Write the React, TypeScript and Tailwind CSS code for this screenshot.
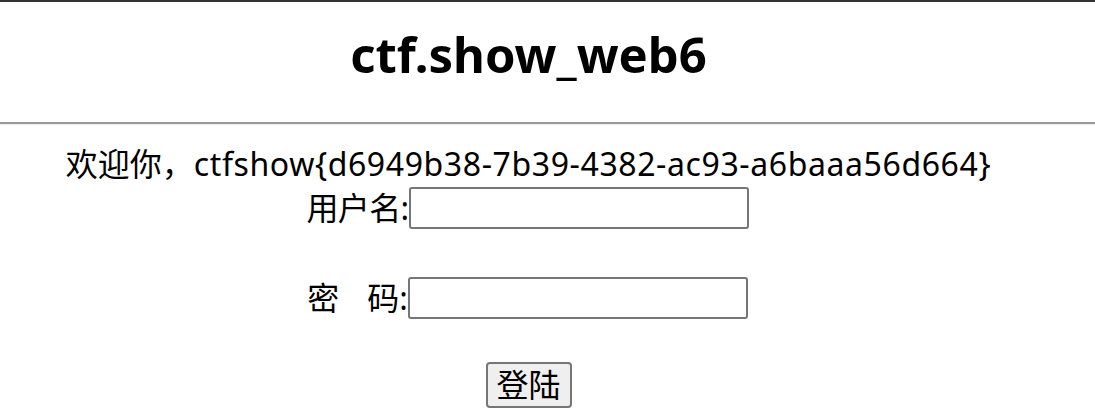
export default function App() {
  return (
    <div
      className="min-h-[417px] w-[1095px] bg-white text-black"
      style={{ fontFamily: '"Noto Sans", "Noto Sans CJK SC", sans-serif' }}
    >
      <div className="h-[2px] w-full bg-[#333333]" />
      <div className="w-[1057px]">
        <h1 className="pt-[14px] pb-[30px] text-center text-[49px] font-bold leading-[76px]">
          ctf.show_web6
        </h1>
      </div>
      <div className="border-t-2 border-b border-t-[#999999] border-b-[#eeeeee]" />
      <div className="flex w-[1057px] flex-col items-center pt-[19px] text-[32px] leading-[40px]">
        <p>
          欢迎你，<span className="tracking-[0.6px]">ctfshow{"{"}d6949b38-7b39-4382-ac93-a6baaa56d664{"}"}</span>
        </p>
        <div className="mt-[3px] flex items-center pr-[2px]">
          <span className="tracking-[-0.6px]">用户名:</span>
          <input className="h-[42px] w-[340px] rounded-[3px] border-2 border-[#767676]" />
        </div>
        <div className="mt-[48px] flex items-center pr-[2px]">
          <span className="flex items-center">
            密<span className="inline-block w-[28px]" />码:
          </span>
          <input
            type="password"
            className="h-[42px] w-[340px] rounded-[3px] border-2 border-[#767676]"
          />
        </div>
        <button className="mt-[43px] h-[46px] w-[86px] rounded-[4px] border-2 border-[#767676] bg-[#efefef] leading-none">
          登陆
        </button>
      </div>
    </div>
  );
}
